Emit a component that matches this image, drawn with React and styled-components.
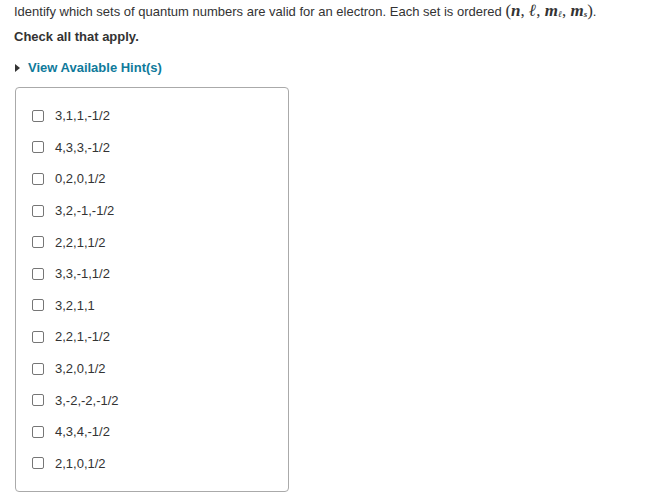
import { useState } from "react";
import styled, { createGlobalStyle } from "styled-components";

const GlobalStyle = createGlobalStyle`
  body {
    margin: 0;
    background: #ffffff;
    font-family: "Liberation Sans", Arial, sans-serif;
    color: #333333;
  }
`;

const options = [
  "3,1,1,-1/2",
  "4,3,3,-1/2",
  "0,2,0,1/2",
  "3,2,-1,-1/2",
  "2,2,1,1/2",
  "3,3,-1,1/2",
  "3,2,1,1",
  "2,2,1,-1/2",
  "3,2,0,1/2",
  "3,-2,-2,-1/2",
  "4,3,4,-1/2",
  "2,1,0,1/2",
];

const App = () => {
  const [checked, setChecked] = useState({});

  const toggle = (i) => setChecked({ ...checked, [i]: !checked[i] });

  return (
    <Page>
      <GlobalStyle />
      <Question>
        Identify which sets of quantum numbers are valid for an electron. Each
        set is ordered{" "}
        <Math>
          (<i>n</i>, <i>ℓ</i>, <i>m</i>
          <Sub>ℓ</Sub>, <i>m</i>
          <Sub>s</Sub>)
        </Math>
        .
      </Question>
      <Instruction>Check all that apply.</Instruction>
      <Hint>
        <Arrow />
        View Available Hint(s)
      </Hint>
      <AnswerBox>
        {options.map((opt, i) => (
          <Option key={i}>
            <Box type="checkbox" checked={!!checked[i]} onChange={() => toggle(i)} />
            {opt}
          </Option>
        ))}
      </AnswerBox>
    </Page>
  );
};

const Page = styled.div`
  padding: 2px 14px 0;
`;

const Question = styled.div`
  font-size: 13px;
  line-height: 18px;
  height: 18px;
  color: #333;
`;

const Math = styled.span`
  font-family: "Liberation Serif", "Times New Roman", serif;
  font-size: 17px;
  i {
    font-style: italic;
    font-weight: bold;
  }
`;

const Sub = styled.sub`
  font-family: "Liberation Serif", serif;
  font-style: italic;
  font-weight: bold;
  font-size: 9px;
  line-height: 0;
  vertical-align: -1px;
`;

const Instruction = styled.div`
  font-size: 13px;
  font-weight: bold;
  margin-top: 8px;
  line-height: 18px;
`;

const Hint = styled.div`
  display: flex;
  align-items: center;
  gap: 8px;
  margin-top: 14px;
  font-size: 13px;
  font-weight: bold;
  color: #0f7a9b;
  line-height: 16px;
`;

const Arrow = styled.span`
  width: 0;
  height: 0;
  border-top: 4.5px solid transparent;
  border-bottom: 4.5px solid transparent;
  border-left: 5px solid #333;
  margin-left: 1px;
`;

const AnswerBox = styled.div`
  margin-top: 11px;
  margin-left: 1px;
  width: 274px;
  box-sizing: border-box;
  border: 1px solid #aaaaaa;
  border-radius: 4px;
  padding: 12px 0 12px 16px;
  display: flex;
  flex-direction: column;
`;

const Option = styled.label`
  display: flex;
  align-items: center;
  gap: 11px;
  height: 31.6px;
  font-size: 13px;
  color: #333;
`;

const Box = styled.input`
  appearance: none;
  margin: 0;
  width: 12px;
  height: 12px;
  border: 1px solid #767676;
  border-radius: 2px;
  background: #fff;
  box-sizing: border-box;
`;

export default App;
